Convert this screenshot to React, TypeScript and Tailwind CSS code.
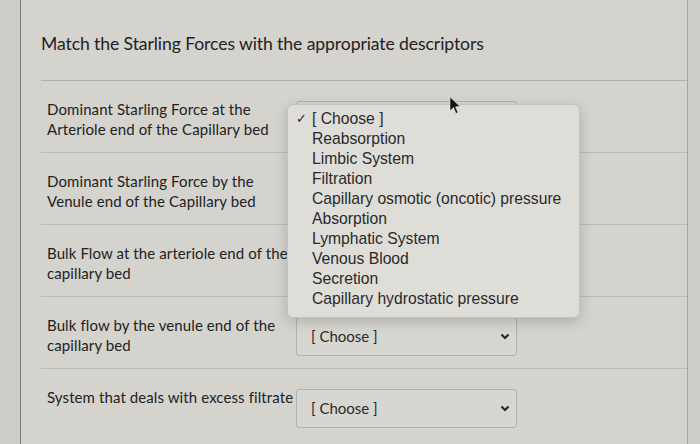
import * as React from 'react';

// ---------------------------------------------------------------------------
// Data
// ---------------------------------------------------------------------------

const ROWS = [
  { label: ['Dominant Starling Force at the', 'Arteriole end of the Capillary bed'] },
  { label: ['Dominant Starling Force by the', 'Venule end of the Capillary bed'] },
  { label: ['Bulk Flow at the arteriole end of the', 'capillary bed'] },
  { label: ['Bulk flow by the venule end of the', 'capillary bed'] },
  { label: ['System that deals with excess filtrate'] },
];

const OPTIONS = [
  '[ Choose ]',
  'Reabsorption',
  'Limbic System',
  'Filtration',
  'Capillary osmotic (oncotic) pressure',
  'Absorption',
  'Lymphatic System',
  'Venous Blood',
  'Secretion',
  'Capillary hydrostatic pressure',
];

// ---------------------------------------------------------------------------
// Pieces
// ---------------------------------------------------------------------------

// selects under the open popup are drawn empty (they are covered anyway)
function SelectBox({ covered }: { covered?: boolean }) {
  return (
    <div className="mt-[2px] flex h-[39px] w-[221px] items-center justify-between rounded-[3px] border border-[#b3b1ac] bg-[#d8d6d1] pl-[14px] pr-[6px]">
      {!covered && (
        <>
          <span className="text-[15px] text-[#2a2a2a]">[ Choose ]</span>
          <svg width="10" height="7" viewBox="0 0 10 7">
            <path d="M1.5 1.5 L5 5 L8.5 1.5" fill="none" stroke="#2a2a2a" strokeWidth="2.2" />
          </svg>
        </>
      )}
    </div>
  );
}

function OptionsPopup() {
  return (
    <div className="absolute left-[287px] top-[104px] w-[293px] rounded-[6px] border border-[#c4c2bd] bg-[#dfddd8] pb-[8px] pt-[4px] shadow-[0_4px_14px_rgba(0,0,0,0.18)] font-['Liberation_Sans',Arial,sans-serif] text-[15.7px] text-[#2a2a2a]">
      {OPTIONS.map((opt, i) => (
        <div key={opt} className="flex h-[20px] items-center">
          <span className="w-[24px] pl-[8px] text-[13px]">{i === 0 ? '✓' : ''}</span>
          <span>{opt}</span>
        </div>
      ))}
    </div>
  );
}

function Cursor() {
  return (
    <svg className="absolute left-[448px] top-[96px]" width="14" height="20" viewBox="0 0 14 20">
      <path d="M2 1 L2 15 L5.5 11.5 L8 17.5 L10 16.5 L7.5 10.8 L12 10.5 Z" fill="#111" stroke="#e5e5e5" strokeWidth="0.6" />
    </svg>
  );
}

// ---------------------------------------------------------------------------
// App
// ---------------------------------------------------------------------------

export default function App() {
  return (
    <div className="relative flex h-[444px] w-[700px] overflow-hidden bg-[#d5d3ce] font-['Lato',sans-serif] text-[#222]">
      {/* left margin of the page */}
      <div className="w-[21px] shrink-0 border-r border-[#7d7b77] bg-[#cfcdc8]" />

      {/* quiz body */}
      <div className="flex w-[667px] shrink-0 flex-col border-r border-[#a9a7a2] pl-[20px]">
        <h1 className="pt-[32px] text-[17.6px] leading-[24px] tracking-[-0.1px]">
          Match the Starling Forces with the appropriate descriptors
        </h1>
        <div className="mt-[24px] border-b border-[#b4b2ad]" />

        {ROWS.map((row, i) => (
          <div
            key={i}
            className={
              'flex h-[72px] shrink-0 pl-[6px] pt-[18px] ' +
              (i < ROWS.length - 1 ? 'border-b border-[#bdbbb6]' : '')
            }
          >
            <div className="w-[249px] shrink-0 text-[15px] leading-[20px] tracking-[0.1px]">
              {row.label.map((l) => (
                <div key={l} className="whitespace-nowrap">{l}</div>
              ))}
            </div>
            <SelectBox covered={i < 3} />
          </div>
        ))}
      </div>

      <div className="flex-1 bg-[#cfcdc8]" />

      <OptionsPopup />
      <Cursor />
    </div>
  );
}
